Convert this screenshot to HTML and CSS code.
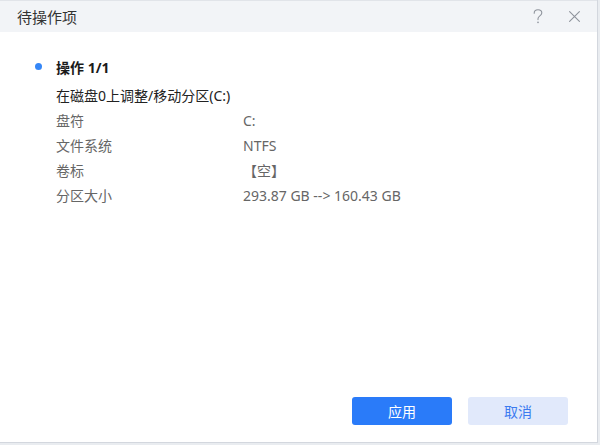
FILE: index.html
```html
<!DOCTYPE html>
<html lang="zh-CN">
<head>
<meta charset="utf-8">
<title>待操作项</title>
<link rel="stylesheet" href="styles.css">
</head>
<body>
<div class="dialog">
  <div class="header">
    <div class="title">待操作项</div>
    <div class="tools">
      <svg class="icon help" width="10" height="15" viewBox="0 0 10 15">
        <path d="M1.2 4.2 C1.2 1.9 3 0.8 5 0.8 C7.2 0.8 8.8 2.1 8.8 4 C8.8 5.6 7.8 6.3 6.6 7.1 C5.5 7.8 5 8.4 5 9.8 L5 10.6" fill="none" stroke="#8e939c" stroke-width="1.1" stroke-linecap="round"/>
        <circle cx="5" cy="13.4" r="0.8" fill="#8e939c"/>
      </svg>
      <svg class="icon close" width="11" height="11" viewBox="0 0 11 11">
        <path d="M0.6 0.6 L10.4 10.4 M10.4 0.6 L0.6 10.4" stroke="#8e939c" stroke-width="1.1" stroke-linecap="round"/>
      </svg>
    </div>
  </div>
  <div class="content">
    <div class="op-title"><span class="dot"></span><span class="op-name">操作 1/1</span></div>
    <div class="op-body">
      <div class="desc">在磁盘0上调整/移动分区(C:)</div>
      <div class="row"><span class="label">盘符</span><span class="value">C:</span></div>
      <div class="row"><span class="label">文件系统</span><span class="value">NTFS</span></div>
      <div class="row"><span class="label">卷标</span><span class="value">【空】</span></div>
      <div class="row"><span class="label">分区大小</span><span class="value">293.87 GB --&gt; 160.43 GB</span></div>
    </div>
  </div>
  <div class="footer">
    <button class="btn primary">应用</button>
    <button class="btn secondary">取消</button>
  </div>
</div>
</body>
</html>
```
FILE: styles.css
```css
html, body {
  margin: 0;
  padding: 0;
  background: #e9ecf0;
}
body {
  width: 600px;
  height: 445px;
  font-family: "Noto Sans", "Noto Sans CJK SC", sans-serif;
  font-size: 14px;
}
.dialog {
  width: 597px;
  height: 442px;
  background: #ffffff;
  border-right: 1px solid #d3d7de;
  border-bottom: 1px solid #d3d7de;
  display: flex;
  flex-direction: column;
}
.header {
  height: 32px;
  flex: none;
  background: #f2f4f7;
  border-top: 1px solid #e1e4e9;
  box-sizing: border-box;
  display: flex;
  align-items: center;
  justify-content: space-between;
  padding-left: 17px;
  padding-right: 17px;
}
.title {
  font-size: 15px;
  color: #333333;
  font-family: "Noto Sans CJK SC", sans-serif;
}
.tools {
  display: flex;
  align-items: center;
  gap: 26px;
}
.icon { display: block; }
.content {
  flex: 1;
  padding: 22px 0 0 35px;
}
.op-title {
  height: 25px;
  display: flex;
  align-items: center;
}
.dot {
  width: 7px;
  height: 7px;
  border-radius: 50%;
  background: #3587f7;
  margin-right: 14px;
}
.op-name {
  font-weight: bold;
  font-size: 14px;
  color: #1a1a1a;
}
.op-body {
  margin-top: 4px;
  padding-left: 21px;
}
.desc {
  line-height: 25px;
  color: #222222;
}
.row {
  display: flex;
  line-height: 25px;
}
.label {
  width: 187px;
  color: #666666;
}
.value {
  color: #666666;
}
.footer {
  flex: none;
  display: flex;
  justify-content: flex-end;
  gap: 16px;
  padding: 0 29px 17px 0;
}
.btn {
  width: 100px;
  height: 28px;
  border: none;
  border-radius: 3px;
  font-family: "Noto Sans CJK SC", sans-serif;
  font-size: 14px;
  padding: 0;
}
.primary {
  background: #2a7bf9;
  color: #ffffff;
}
.secondary {
  background: #e1e9fb;
  color: #3b7bf0;
}
```
